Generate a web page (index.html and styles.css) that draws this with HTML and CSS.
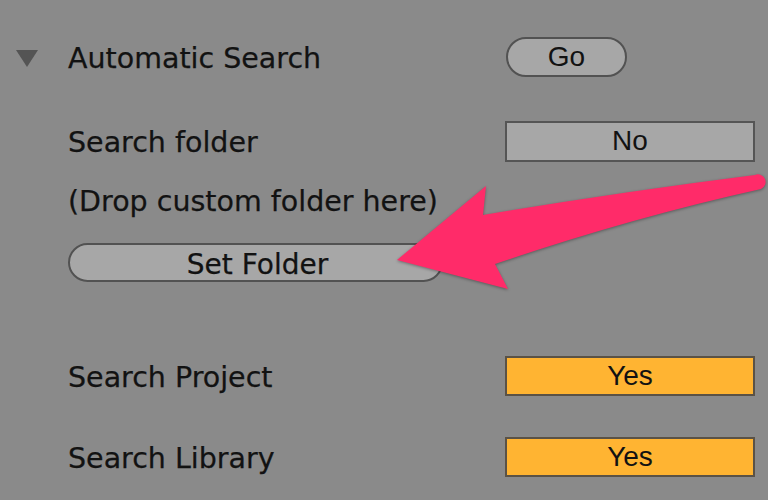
FILE: index.html
```html
<!DOCTYPE html>
<html>
<head>
<meta charset="utf-8">
<link rel="stylesheet" href="styles.css">
</head>
<body>
<div class="panel">
  <div class="row row-head">
    <svg class="disclosure" width="22" height="17" viewBox="0 0 22 17"><polygon points="0,0 22,0 11,17" fill="#545454"/></svg>
    <span class="label">Automatic Search</span>
    <button class="pill go">Go</button>
  </div>
  <div class="row row-folder">
    <span class="label">Search folder</span>
    <div class="toggle off">No</div>
  </div>
  <div class="row row-drop">
    <span class="label">(Drop custom folder here)</span>
  </div>
  <div class="row row-set">
    <button class="pill set">Set Folder</button>
  </div>
  <div class="row row-project">
    <span class="label">Search Project</span>
    <div class="toggle on">Yes</div>
  </div>
  <div class="row row-library">
    <span class="label">Search Library</span>
    <div class="toggle on">Yes</div>
  </div>
  <svg class="arrow" width="768" height="500" viewBox="0 0 768 500">
    <path d="M 755 175 Q 620 192 483 215 L 486 186 L 397 260 L 508 289 L 495 264 Q 630 218 761 189 A 7.2 7.2 0 0 0 755 175 Z" fill="#ff2b69"/>
  </svg>
</div>
</body>
</html>
```
FILE: styles.css
```css
html, body {
  margin: 0;
  padding: 0;
  background: #8a8a8a;
}
.panel {
  position: relative;
  width: 768px;
  height: 500px;
  overflow: hidden;
  display: flex;
  flex-direction: column;
  padding: 37px 0 0 68px;
  box-sizing: border-box;
  font-family: "DejaVu Sans", sans-serif;
  color: #121212;
}
.row {
  display: flex;
  align-items: center;
  height: 40px;
  width: 687px;
}
.row-head { position: relative; }
.disclosure {
  position: absolute;
  left: -52px;
  top: 13px;
}
.row-folder { margin-top: 44px; }
.row-drop { margin-top: 19px; }
.row-set { margin-top: 23px; height: 39px; }
.row-project { margin-top: 74px; }
.row-library { margin-top: 41px; height: 39px; }
.label {
  font-size: 28.5px;
  line-height: 40px;
  padding-top: 4px;
  flex: 1;
  white-space: nowrap;
  -webkit-text-stroke: 0.25px #121212;
}
.pill {
  box-sizing: border-box;
  border: 2px solid #525252;
  background: #a7a7a7;
  border-radius: 20px;
  padding: 0;
  color: #121212;
  height: 40px;
}
.go {
  width: 121px;
  margin-right: 128px;
  font-family: "Liberation Sans", Arial, sans-serif;
  font-size: 28px;
  line-height: 36px;
}
.set {
  width: 375px;
  height: 39px;
  font-family: "DejaVu Sans", sans-serif;
  font-size: 28px;
  line-height: 36px;
  padding: 2px 0 0 4px;
  -webkit-text-stroke: 0.25px #121212;
}
.toggle {
  box-sizing: border-box;
  width: 250px;
  height: 40px;
  border: 2px solid #555;
  font-family: "Liberation Sans", Arial, sans-serif;
  font-size: 28px;
  line-height: 36px;
  text-align: center;
  color: #121212;
}
.toggle.off { background: #a7a7a7; height: 41px; }
.toggle.on { background: #ffb432; border-color: #5a5246; }
.arrow {
  position: absolute;
  left: 0;
  top: 0;
  pointer-events: none;
  filter: drop-shadow(0 1px 1.5px rgba(0,0,0,0.35));
}
```
